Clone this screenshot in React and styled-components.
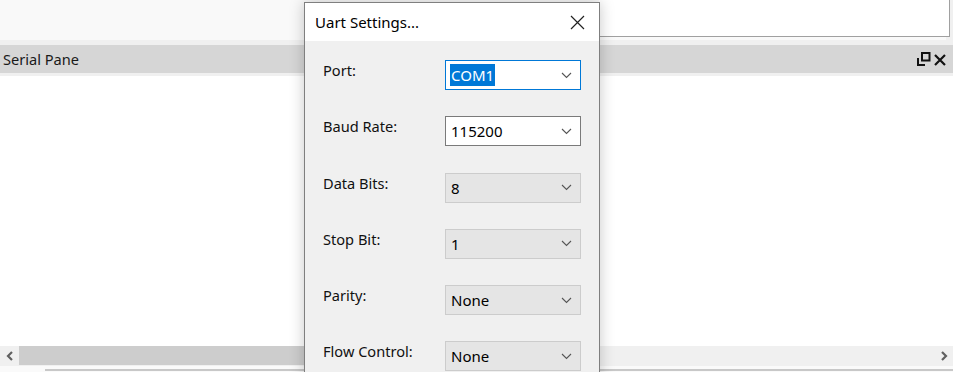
import React from "react";
import styled, { createGlobalStyle } from "styled-components";

const GlobalStyle = createGlobalStyle`
    html, body {
        margin: 0;
        padding: 0;
        background: #fafafa;
    }
    body {
        font-family: "Noto Sans", "Noto Sans CJK SC", "Liberation Sans", sans-serif;
        color: #000;
    }
`;

const Page = styled.div`
    position: relative;
    width: 953px;
    height: 372px;
    overflow: hidden;
    display: flex;
    flex-direction: column;
    background: #fafafa;
`;

const TopArea = styled.div`
    flex: none;
    height: 40px;
    display: flex;
    justify-content: flex-end;
    background: linear-gradient(to right, #f9f9f9 0, #f9f9f9 946px, #f0f0f0 946px);
`;

const OutputBox = styled.div`
    width: 350px;
    height: 36px;
    margin-right: 3px;
    background: #fff;
    border-right: 1px solid #a0a0a0;
    border-bottom: 1px solid #a0a0a0;
`;

const Strip = styled.div`
    flex: none;
    height: ${(p) => p.$h}px;
    background: #f0f0f0;
`;

const PaneHeader = styled.div`
    flex: none;
    height: 28px;
    display: flex;
    align-items: center;
    padding: 0 7px 0 3px;
    background: #d6d6d6;
    font-size: 14.6px;
    color: #1a1a1a;
`;

const PaneTitle = styled.span`
    flex: 1;
    line-height: 28px;
`;

const HeaderIcons = styled.div`
    display: flex;
    align-items: center;
    gap: 3px;
    margin-top: 1px;
`;

const PaneBody = styled.div`
    flex: 1;
    background: #fff;
`;

const HScroll = styled.div`
    flex: none;
    height: 20px;
    display: flex;
    align-items: stretch;
    background: #f0f0f0;
`;

const ScrollArrow = styled.div`
    width: 19px;
    display: flex;
    align-items: center;
    justify-content: center;
`;

const ScrollTrack = styled.div`
    flex: 1;
    display: flex;
    padding: 0 0 1px 0;
`;

const ScrollThumb = styled.div`
    width: 560px;
    background: #cdcdcd;
`;

const Footer = styled.div`
    flex: none;
    height: 5px;
    display: flex;
    align-items: flex-end;
    padding: 0 0 1px 45px;
`;

const FooterLine = styled.div`
    height: 2px;
    width: 100%;
    background: #c8c8c8;
`;

const Dialog = styled.div`
    position: absolute;
    left: 304px;
    top: 2px;
    width: 294px;
    height: 400px;
    border: 1px solid #7f7f7f;
    background: #f0f0f0;
    box-shadow: 0 0 14px rgba(0, 0, 0, 0.22);
    display: flex;
    flex-direction: column;
`;

const TitleBar = styled.div`
    height: 38px;
    display: flex;
    align-items: center;
    justify-content: space-between;
    padding: 0 14px 0 10px;
    background: #fff;
    font-size: 15px;
    color: #000;
`;

const DialogBody = styled.div`
    display: flex;
    flex-direction: column;
    gap: 26.3px;
    padding: 19px 18px 0 18px;
`;

const Row = styled.div`
    display: flex;
    align-items: flex-start;
    height: 30px;
`;

const Label = styled.div`
    width: 122px;
    font-size: 14.6px;
    line-height: 20px;
    color: #111;
`;

const Combo = styled.div`
    width: 136px;
    height: 30px;
    box-sizing: border-box;
    display: flex;
    align-items: center;
    justify-content: space-between;
    padding: 0 8px 0 4px;
    font-size: 15px;
    background: ${(p) => (p.$enabled ? "#fff" : "#e5e5e5")};
    border: 1px solid
        ${(p) => (p.$focused ? "#0078d7" : p.$enabled ? "#7a7a7a" : "#cccccc")};
`;

const ComboText = styled.span`
    padding: 0 1px;
    line-height: 22px;
    background: ${(p) => (p.$selected ? "#0078d7" : "transparent")};
    color: ${(p) => (p.$selected ? "#fff" : "#000")};
`;

function Chevron() {
    return (
        <svg width="11" height="7" viewBox="0 0 11 7">
            <polyline
                points="1,1 5.5,5.5 10,1"
                fill="none"
                stroke="#555"
                strokeWidth="1.1"
            />
        </svg>
    );
}

function CloseIcon() {
    return (
        <svg width="15" height="15" viewBox="0 0 15 15">
            <path d="M1 1 L14 14 M14 1 L1 14" stroke="#222" strokeWidth="1.2" />
        </svg>
    );
}

function RestoreIcon() {
    return (
        <svg width="15" height="15" viewBox="0 0 15 15">
            <rect x="6" y="1" width="7.5" height="7.5" fill="none" stroke="#111" strokeWidth="2" />
            <polyline points="2,6 2,13 9,13" fill="none" stroke="#111" strokeWidth="2" />
        </svg>
    );
}

function PaneClose() {
    return (
        <svg width="12" height="12" viewBox="0 0 12 12">
            <path d="M1 1 L11 11 M11 1 L1 11" stroke="#111" strokeWidth="2.2" />
        </svg>
    );
}

function ArrowIcon({ dir }) {
    const pts = dir === "left" ? "6,1 2,5 6,9" : "2,1 6,5 2,9";
    return (
        <svg width="8" height="10" viewBox="0 0 8 10">
            <polyline points={pts} fill="none" stroke="#606060" strokeWidth="2.2" />
        </svg>
    );
}

const settings = [
    { label: "Port:", value: "COM1", enabled: true, focused: true, selected: true },
    { label: "Baud Rate:", value: "115200", enabled: true },
    { label: "Data Bits:", value: "8" },
    { label: "Stop Bit:", value: "1" },
    { label: "Parity:", value: "None" },
    { label: "Flow Control:", value: "None" },
];

export default function App() {
    return (
        <>
            <GlobalStyle />
            <Page>
                <TopArea>
                    <OutputBox />
                </TopArea>
                <Strip $h={5} />
                <PaneHeader>
                    <PaneTitle>Serial Pane</PaneTitle>
                    <HeaderIcons>
                        <RestoreIcon />
                        <PaneClose />
                    </HeaderIcons>
                </PaneHeader>
                <Strip $h={3} />
                <PaneBody />
                <HScroll>
                    <ScrollArrow>
                        <ArrowIcon dir="left" />
                    </ScrollArrow>
                    <ScrollTrack>
                        <ScrollThumb />
                    </ScrollTrack>
                    <ScrollArrow>
                        <ArrowIcon dir="right" />
                    </ScrollArrow>
                </HScroll>
                <Footer>
                    <FooterLine />
                </Footer>

                <Dialog>
                    <TitleBar>
                        <span>Uart Settings...</span>
                        <CloseIcon />
                    </TitleBar>
                    <DialogBody>
                        {settings.map((s) => (
                            <Row key={s.label}>
                                <Label>{s.label}</Label>
                                <Combo $enabled={s.enabled} $focused={s.focused}>
                                    <ComboText $selected={s.selected}>{s.value}</ComboText>
                                    <Chevron />
                                </Combo>
                            </Row>
                        ))}
                    </DialogBody>
                </Dialog>
            </Page>
        </>
    );
}
